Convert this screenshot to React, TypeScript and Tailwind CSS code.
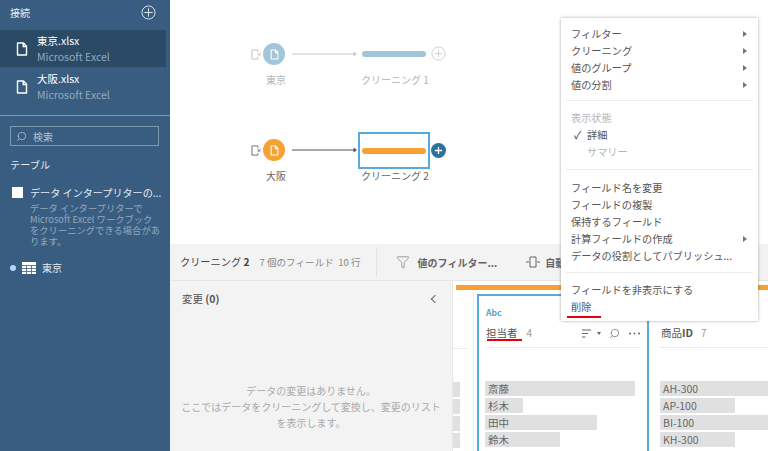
import { Search, Filter } from "lucide-react";

const F = "font-['Noto_Sans_CJK_JP','Noto_Sans',sans-serif]";

function Doc({ className = "" }: { className?: string }) {
  return (
    <svg viewBox="0 0 12 14" className={className} fill="none" stroke="currentColor" strokeWidth="1.4">
      <path d="M1.5 1h6l3 3.2V13h-9z" strokeLinejoin="round" />
      <path d="M7.2 1v3.5h3.3" />
    </svg>
  );
}

function Conn({ name, active }: { name: string; active?: boolean }) {
  return (
    <div className={`flex h-[37px] w-[166px] items-center pl-[16px] ${active ? "bg-[#2b4a66]" : ""}`}>
      <Doc className="h-[14px] w-[12px] text-white" />
      <div className="ml-[9px] flex flex-col">
        <span className="text-[10.5px] leading-[16px] text-white">{name}</span>
        <span className="text-[10.5px] leading-[16px] text-[#93a9bf]">Microsoft Excel</span>
      </div>
    </div>
  );
}

function Sidebar() {
  return (
    <aside className="flex h-[451px] w-[170px] shrink-0 flex-col overflow-hidden bg-[#395d80]">
      <div className="mb-[5px] flex h-[25px] items-center justify-between pl-[10px] pr-[14px]">
        <span className="text-[10px] text-[#e4ebf2]">接続</span>
        <svg viewBox="0 0 16 16" className="h-[15px] w-[15px] text-[#e4ebf2]" fill="none" stroke="currentColor" strokeWidth="1">
          <circle cx="8" cy="8" r="7" />
          <path d="M8 3.5v9M3.5 8h9" />
        </svg>
      </div>
      <Conn name="東京.xlsx" active />
      <div className="mt-px">
        <Conn name="大阪.xlsx" />
      </div>
      <div className="mt-[10px] h-px bg-[#7f9ab3]" />
      <div className="ml-[10px] mt-[10px] flex h-[20px] w-[149px] items-center border border-[#7f9ab3] pl-[5px]">
        <Search className="h-[11px] w-[11px] -scale-x-100 text-[#c4d1dd]" strokeWidth={1.5} />
        <span className="ml-[6px] text-[10px] text-[#b2c2d1]">検索</span>
      </div>
      <div className="ml-[10px] mt-[10px] text-[10.2px] leading-[18px] text-[#e4ebf2]">テーブル</div>
      <div className="ml-[12px] mt-[12px] flex">
        <div className="mt-[1px] h-[11px] w-[11px] shrink-0 bg-white" />
        <div className="ml-[7px] w-[134px]">
          <div className="whitespace-nowrap text-[10.1px] leading-[13px] text-[#e4ebf2]">データ インタープリターの...</div>
          <div className="mt-[4px] text-[9.3px] leading-[11px] text-[#93a9bf]">
            <div className="whitespace-nowrap">データ インタープリターで</div>
            <div className="whitespace-nowrap">Microsoft Excel ワークブック</div>
            <div className="whitespace-nowrap">をクリーニングできる場合があ</div>
            <div>ります。</div>
          </div>
        </div>
      </div>
      <div className="ml-[10px] mt-[13px] flex items-center">
        <div className="h-[6px] w-[6px] rounded-full bg-[#b5d6ef]" />
        <svg viewBox="0 0 14 12" className="ml-[6px] h-[12px] w-[14px]">
          <rect x="0" y="0" width="14" height="12" fill="#fff" />
          <path d="M0 3.5h14M0 6.5h14M0 9.5h14M4.5 3.5v8.5M9.5 3.5v8.5" stroke="#395d80" strokeWidth=".8" />
        </svg>
        <span className="ml-[6px] text-[10px] text-[#e4ebf2]">東京</span>
      </div>
    </aside>
  );
}

function Node({ x, y, color, dim }: { x: number; y: number; color: string; dim?: boolean }) {
  return (
    <div className="absolute flex items-center" style={{ left: x, top: y }}>
      <svg viewBox="0 0 12 12" className={`h-[11px] w-[11px] ${dim ? "text-[#bdbdbd]" : "text-[#666]"}`} fill="none" stroke="currentColor" strokeWidth="1">
        <path d="M7.5 3V1H1v10h6.5V9M7 4.5l3.5 3M10.5 4.5L7 7.5" />
      </svg>
      <div className="ml-[1px] flex h-[22px] w-[22px] items-center justify-center rounded-full" style={{ background: color }}>
        <Doc className="h-[11px] w-[9px] text-white" />
      </div>
    </div>
  );
}

function Arrow({ x, y, color }: { x: number; y: number; color: string }) {
  return (
    <svg className="absolute h-[8px] w-[66px]" style={{ left: x, top: y }} viewBox="0 0 66 8" fill="none">
      <path d="M0 4h64" stroke={color} strokeWidth="1.2" />
      <path d="M61.5 1.5L65 4l-3.5 2.5z" fill={color} />
    </svg>
  );
}

function Canvas() {
  return (
    <div className="relative h-[244px] bg-white text-[10px]">
      <Node x={81} y={43} color="#a3c5da" dim />
      <Arrow x={122} y={50} color="#c9c9c9" />
      <div className="absolute left-[192px] top-[51px] h-[6px] w-[64px] rounded-full bg-[#a3c5da]" />
      <svg viewBox="0 0 16 16" className="absolute left-[261px] top-[46px] h-[15px] w-[15px] text-[#cfcfcf]" fill="none" stroke="currentColor">
        <circle cx="8" cy="8" r="7" />
        <path d="M8 4v8M4 8h8" />
      </svg>
      <span className="absolute left-[96px] top-[72px] text-[#b3b3b3]">東京</span>
      <span className="absolute left-[191px] top-[72px] text-[#b3b3b3]">クリーニング 1</span>

      <Node x={81} y={139} color="#f7a132" />
      <Arrow x={122} y={146} color="#555" />
      <div className="absolute left-[188px] top-[132px] flex h-[37px] w-[72px] items-center justify-center border-2 border-[#58a9de]">
        <div className="h-[6px] w-[64px] rounded-full bg-[#f7a132]" />
      </div>
      <div className="absolute left-[261px] top-[143px] flex h-[15px] w-[15px] items-center justify-center rounded-full bg-[#2e6f9c]">
        <svg viewBox="0 0 10 10" className="h-[9px] w-[9px]" stroke="#fff" strokeWidth="1.4">
          <path d="M5 1v8M1 5h8" />
        </svg>
      </div>
      <span className="absolute left-[96px] top-[168px] text-[#666]">大阪</span>
      <span className="absolute left-[191px] top-[168px] text-[#666]">クリーニング 2</span>
    </div>
  );
}

function Bars({ items }: { items: [string, number][] }) {
  return (
    <div className="flex flex-col gap-[2px]">
      {items.map(([t, w], i) => (
        <div key={i} className="flex h-[15px] items-center bg-[#e0e0e0] pl-[3px] text-[10.5px] text-[#666]" style={{ width: w }}>
          {t}
        </div>
      ))}
    </div>
  );
}

function Bottom() {
  return (
    <div className="flex h-[207px] flex-col overflow-hidden">
      <div className="flex h-[37px] shrink-0 items-center border-b border-[#e6e6e6] bg-[#f3f3f3] pl-[10px]">
        <span className="whitespace-nowrap text-[10.2px] text-[#444]">
          クリーニング <b>2</b>
        </span>
        <span className="ml-[10px] whitespace-nowrap text-[9.6px] text-[#888]">7 個のフィールド&nbsp;&nbsp;10 行</span>
        <div className="ml-[15px] h-[30px] w-px bg-[#e4e4e4]" />
        <Filter className="ml-[19px] h-[14px] w-[14px] text-[#666]" strokeWidth={1} />
        <span className="ml-[8px] whitespace-nowrap text-[10px] font-bold text-[#666]">値のフィルター...</span>
        <svg viewBox="0 0 14 14" className="ml-[29px] h-[14px] w-[14px] shrink-0 text-[#666]" fill="none" stroke="currentColor">
          <path d="M4 2h6v10H4zM3 7H0M14 7h-3" />
        </svg>
        <span className="ml-[5px] whitespace-nowrap text-[10px] font-bold text-[#666]">自動分割</span>
      </div>
      <div className="flex min-h-0 flex-1">
        <div className="w-[283px] shrink-0 border-r border-[#e6e6e6] bg-[#f3f3f3] px-[10px]">
          <div className="flex h-[36px] items-center justify-between pl-[2px] pr-[2px]">
            <span className="text-[10.5px] text-[#555]">
              変更 <b>(0)</b>
            </span>
            <span className="mr-[2px] h-[6px] w-[6px] rotate-45 border-b border-l border-[#666]" />
          </div>
          <div className="mt-[66px] whitespace-nowrap text-center text-[10px] leading-[16px] text-[#aaa]">
            データの変更はありません。
            <br />
            ここではデータをクリーニングして変換し、変更のリスト
            <br />
            を表示します。
          </div>
        </div>
        <div className="relative min-w-0 flex-1 bg-white pt-[4px]">
          <div className="ml-[3px] h-[5px] bg-[#f7a132]" />
          <div className="flex">
            <div className="w-[21px] shrink-0 border-r border-[#ececec]">
              <div className="mt-[58px] w-[15px] border-t border-[#ececec]" />
              <div className="mt-[33px]">
                <Bars items={[["", 7], ["", 7], ["", 7], ["", 7]]} />
              </div>
            </div>
            <div className="ml-[3px] mt-[4px] h-[170px] w-[172px] shrink-0 border-2 border-[#58a9de] px-[7px]">
              <div className="pt-[10px] text-[8.5px] font-semibold leading-[12px] text-[#5b9fc7]">Abc</div>
              <div className="mt-[3px] flex h-[27px] items-start border-b border-[#ececec] leading-[24px]">
                <span className="text-[10.5px] text-[#555]">担当者</span>
                <span className="ml-[9px] text-[10px] text-[#999]">4</span>
                <div className="ml-auto flex h-[24px] items-center text-[#666]">
                  <svg viewBox="0 0 9 9" className="h-[9px] w-[9px]" stroke="currentColor" strokeWidth="1.2">
                    <path d="M0 1h9M0 4.5h6M0 8h3.5" />
                  </svg>
                  <span className="ml-[6px] h-0 w-0 border-x-[2.5px] border-t-[3px] border-x-transparent border-t-[#666]" />
                  <Search className="ml-[8px] h-[11px] w-[11px] -scale-x-100" strokeWidth={1.5} />
                  <svg viewBox="0 0 11 3" className="ml-[9px] h-[3px] w-[11px]" fill="currentColor">
                    <circle cx="1" cy="1.5" r="1" />
                    <circle cx="5.5" cy="1.5" r="1" />
                    <circle cx="10" cy="1.5" r="1" />
                  </svg>
                </div>
              </div>
              <div className="-ml-px mt-[33px]">
                <Bars items={[["斎藤", 150], ["杉木", 38], ["田中", 112], ["鈴木", 75]]} />
              </div>
            </div>
            <div className="ml-[10px] shrink-0">
              <div className="mt-[31px] flex h-[27px] w-[120px] items-start border-b border-[#ececec] pl-[2px] leading-[24px]">
                <span className="text-[10.5px] text-[#555]">
                  商品<b className="font-bold">ID</b>
                </span>
                <span className="ml-[8px] text-[10px] text-[#999]">7</span>
              </div>
              <div className="ml-px mt-[33px]">
                <Bars items={[["AH-300", 120], ["AP-100", 75], ["BI-100", 120], ["KH-300", 75]]} />
              </div>
            </div>
          </div>
          <div className="absolute left-[34px] top-[58px] h-[2px] w-[35px] bg-[#e3000f]" />
        </div>
      </div>
    </div>
  );
}

function Item({ t, arrow, dim, inset }: { t: string; arrow?: boolean; dim?: boolean; inset?: boolean }) {
  return (
    <div className={`flex h-[17px] items-center justify-between text-[10.2px] ${inset ? "pl-[16px]" : ""} ${dim ? "text-[#b5b5b5]" : "text-[#555]"}`}>
      <span className="whitespace-nowrap">{t}</span>
      {arrow && <span className="mr-[1px] h-0 w-0 border-y-[3.5px] border-l-[4px] border-y-transparent border-l-[#777]" />}
    </div>
  );
}

function Menu() {
  return (
    <div className="absolute left-[561px] top-[18px] h-[303px] w-[197px] bg-white px-[10px] pt-[7px] shadow-[0_0_3px_rgba(0,0,0,0.35)]">
      <Item t="フィルター" arrow />
      <Item t="クリーニング" arrow />
      <Item t="値のグループ" arrow />
      <Item t="値の分割" arrow />
      <div className="-mx-[5px] mb-[8px] mt-[7px] h-px bg-[#ececec]" />
      <Item t="表示状態" dim />
      <div className="relative">
        <span className="absolute left-[3px] top-0 text-[10.5px] leading-[17px] text-[#333]">✓</span>
        <Item t="詳細" inset />
      </div>
      <Item t="サマリー" dim inset />
      <div className="-mx-[5px] my-[9px] h-px bg-[#ececec]" />
      <Item t="フィールド名を変更" />
      <Item t="フィールドの複製" />
      <Item t="保持するフィールド" />
      <Item t="計算フィールドの作成" arrow />
      <Item t="データの役割としてパブリッシュ..." />
      <div className="-mx-[5px] my-[8px] h-px bg-[#ececec]" />
      <Item t="フィールドを非表示にする" />
      <Item t="削除" />
      <div className="absolute left-[6px] top-[298px] h-[2px] w-[34px] bg-[#e3000f]" />
    </div>
  );
}

export default function App() {
  return (
    <div className={`relative flex h-[451px] w-[768px] overflow-hidden bg-white ${F}`}>
      <Sidebar />
      <main className="min-w-0 flex-1">
        <Canvas />
        <Bottom />
      </main>
      <Menu />
    </div>
  );
}
